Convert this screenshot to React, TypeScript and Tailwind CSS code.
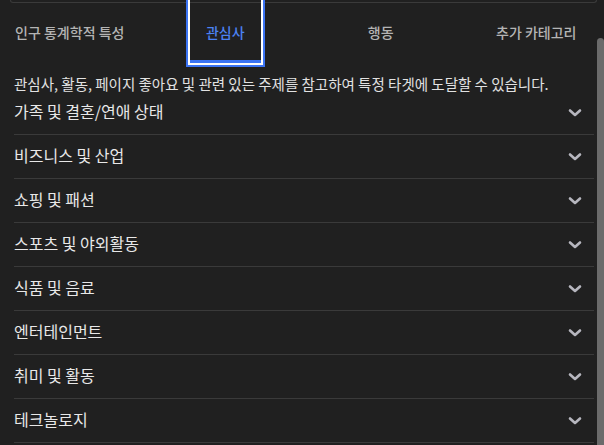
import React from "react";

const font = { fontFamily: '"Noto Sans CJK KR", "Noto Sans", sans-serif' };

const tabs = ["인구 통계학적 특성", "관심사", "행동", "추가 카테고리"];
const items = [
  "가족 및 결혼/연애 상태",
  "비즈니스 및 산업",
  "쇼핑 및 패션",
  "스포츠 및 야외활동",
  "식품 및 음료",
  "엔터테인먼트",
  "취미 및 활동",
  "테크놀로지",
];

function Chevron() {
  return (
    <svg width="14" height="10" viewBox="0 0 14 10" fill="none">
      <path d="M2 2.5 L7 7 L12 2.5" stroke="#b6b6be" strokeWidth="2.6" strokeLinecap="round" strokeLinejoin="round" />
    </svg>
  );
}

export default function App() {
  return (
    <div className="relative w-[604px] h-[445px] overflow-hidden bg-[#202020]" style={font}>
      <div className="h-[3px] ml-[10px] mr-[7px] border-x border-b border-[#3a3a3a] rounded-b-[6px]" />
      <div className="flex -ml-[8px] w-[622px]">
        {tabs.map((t, i) => (
          <div key={t} className="w-[155.5px] flex justify-center">
            {i === 1 ? (
              <div className="relative z-10 h-[67px] -mt-[7px] pt-[9px] w-[71px] flex items-center justify-center border-b-[3px] border-[#3b74f5] ring-2 ring-[#3b74f5] ring-offset-2 ring-offset-white text-[14px] font-medium text-[#4c82f2]">
                {t}
              </div>
            ) : (
              <div className="h-[67px] -mt-[7px] pt-[9px] pb-[3px] flex items-center justify-center text-[14px] font-medium text-[#b4b4b4] whitespace-nowrap">
                {t}
              </div>
            )}
          </div>
        ))}
      </div>
      <div className="mt-[13px] ml-[14px] h-[16px] leading-[16px] text-[14.5px] text-[#e2e2e2] whitespace-nowrap">
        관심사, 활동, 페이지 좋아요 및 관련 있는 주제를 참고하여 특정 타겟에 도달할 수 있습니다.
      </div>
      <div className="ml-[14px] w-[580px]">
        {items.map((it, i) => (
          <div
            key={it}
            className={`flex items-center justify-between pr-[12px] border-b border-[#3a3a3a] ${i === 0 ? "h-[43px]" : "h-[44px]"}`}
          >
            <span className="mb-[4px] text-[16px] text-[#e8e8e8]">{it}</span>
            <Chevron />
          </div>
        ))}
      </div>
      <div className="absolute right-0 top-[38px] bottom-0 w-[7px] rounded-t-[4px] bg-[#6b6b6b]" />
    </div>
  );
}
